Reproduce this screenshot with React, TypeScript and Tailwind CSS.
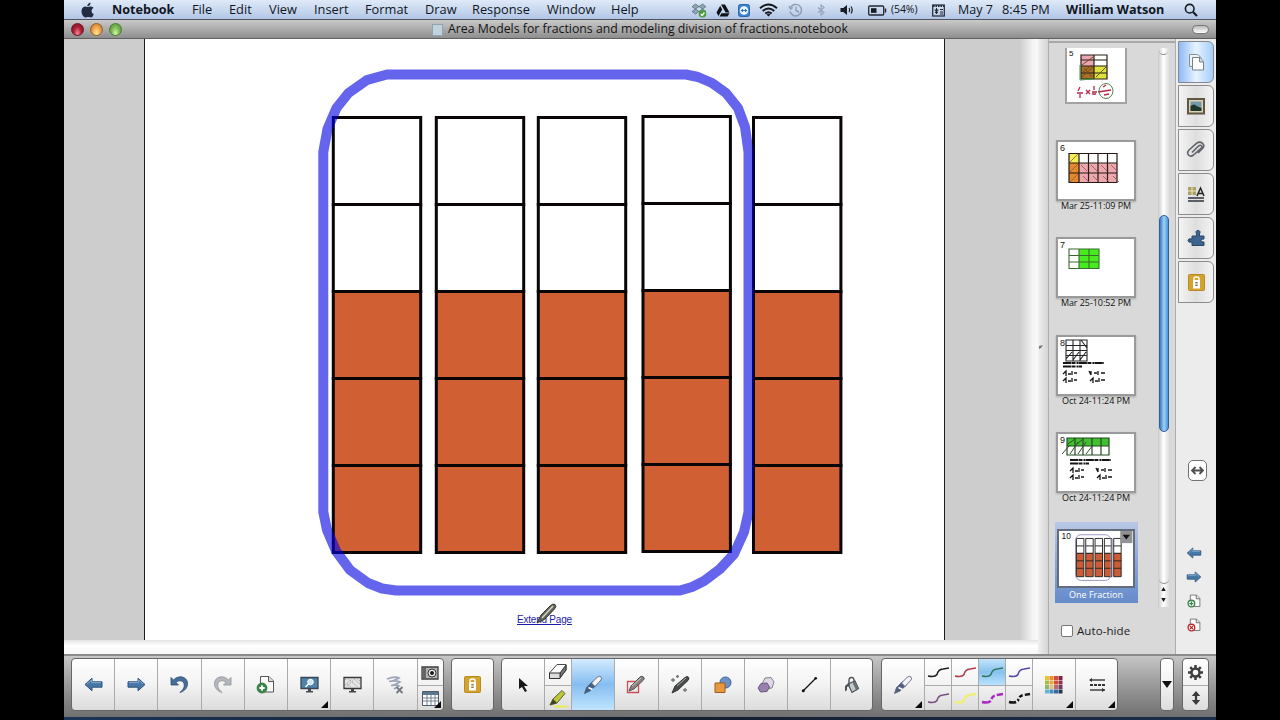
import type { ReactNode } from 'react'

const MENUS = [
  { label: 'Notebook', cls: 'w-[80px] font-bold text-[12.6px]' },
  { label: 'File', cls: 'w-[37px]' },
  { label: 'Edit', cls: 'w-[40px]' },
  { label: 'View', cls: 'w-[45px]' },
  { label: 'Insert', cls: 'w-[51px]' },
  { label: 'Format', cls: 'w-[60px]' },
  { label: 'Draw', cls: 'w-[47px]' },
  { label: 'Response', cls: 'w-[75px]' },
  { label: 'Window', cls: 'w-[64px]' },
  { label: 'Help', cls: 'w-[40px]' },
]

const COLUMNS = [
  { x: 333.3, y: 117.5 },
  { x: 436.3, y: 117.5 },
  { x: 538.3, y: 117.5 },
  { x: 643, y: 116.5 },
  { x: 753.5, y: 117.5 },
]

const CELL = 87

function Icon({ w, h, children }: { w: number; h: number; children: ReactNode }) {
  return (
    <svg width={w} height={h} viewBox={`0 0 ${w} ${h}`} className="block shrink-0" fill="none">
      {children}
    </svg>
  )
}

function BlueArrow({ right, small }: { right?: boolean; small?: boolean }) {
  const w = small ? 16 : 19
  const h = small ? 12 : 15
  return (
    <svg width={w} height={h} viewBox="0 0 19 15" className={right ? 'block -scale-x-100' : 'block'}>
      <path d="M1 7.5 8 1.2v3.6h10v5.4H8v3.6z" fill="#4777a8" stroke="#2f5378" strokeWidth="1" />
      <path d="M3 7 7.5 3v2.6H17" fill="none" stroke="#7fa9cf" />
    </svg>
  )
}

function TurnArrow({ redo }: { redo?: boolean }) {
  return (
    <svg width="19" height="19" viewBox="0 0 19 19" className={redo ? 'block -scale-x-100' : 'block'}>
      <path
        d="M1 2.500v7.500h7.500L6 7.500c3-3 8-2 8.300 2.500.1 3-1.800 5.500-4.500 7.500 5-1.200 8-5 7.700-9.500C17 1.500 8.500-.5 3.500 5z"
        fill={redo ? '#b4b8bd' : '#456f9b'}
        stroke={redo ? '#8f949a' : '#2e4d70'}
        strokeWidth=".8"
      />
    </svg>
  )
}

function PageIcon({ remove, small }: { remove?: boolean; small?: boolean }) {
  const w = small ? 14 : 19
  const color = remove ? '#b52c2c' : '#3a8248'
  return (
    <svg width={w} height={w} viewBox="0 0 19 19" className="block">
      <path d="M4.500 1.500h8.500l4.500 4.500v11h-13z" fill="#fbfbfb" stroke="#555" />
      <path d="M12.500 1.500v5h5" fill="#ddd" stroke="#555" />
      <circle cx="6" cy="13" r="4.500" fill={small ? '#fff' : color} stroke={color} strokeWidth="1.800" />
      {remove ? (
        <path d="m4 11 4 4m0-4-4 4" stroke={color} strokeWidth="1.800" />
      ) : (
        <path d="M6 10.300v5.400M3.300 13h5.400" stroke={small ? color : '#fff'} strokeWidth="1.800" />
      )}
    </svg>
  )
}

function LockIcon() {
  return (
    <Icon w={17} h={17}>
      <rect x=".5" y=".5" width="16" height="16" rx="1" fill="#d3a32d" stroke="#b68a25" />
      <path d="M6 7V4.500q0-1.500 2.500-1.500T11 4.500V7" stroke="#fff" strokeWidth="1.400" />
      <rect x="5" y="6" width="7" height="8.500" fill="#fff" />
      <path d="M8.500 8v4.500" stroke="#8c8052" strokeWidth="2.500" strokeDasharray="1.500 1" />
    </Icon>
  )
}

function PenIcon({ blue }: { blue?: boolean }) {
  return (
    <Icon w={20} h={20}>
      <path d="m1.500 18.500 2-6 6-6 4 3.500-6.500 6z" fill={blue ? '#41618a' : '#53617e'} stroke="#4b5568" strokeWidth=".7" />
      <path d="m8.500 8 6-6q2.500-1.500 3.500 0t0 3l-6 6.500z" fill="#f3f4f8" stroke="#5d6678" strokeWidth=".9" />
      <path d="m5.500 12.500 4 2" stroke="#fff" strokeWidth="1.500" />
    </Icon>
  )
}

function AppleIcon() {
  return (
    <Icon w={13} h={16}>
      <path d="M9.500.5q.2 2-1 3T6.200 4.300q0-1.600 1-2.600T9.500.5z" fill="#29344d" />
      <path
        d="M12.500 5.700q-2 1.200-2 3.200 0 2.300 2.300 3.300-1.200 3.300-3 3.300-.8 0-1.500-.4t-1.800 0-1.700.4C2.500 15.500.5 12.500.5 9.300.5 6.200 2.500 4.500 4.400 4.500q1 0 1.700.4t1.500-.1q3-1 4.900.9z"
        fill="#222c43"
      />
    </Icon>
  )
}

function MenuBar() {
  return (
    <div className="flex h-5 items-center border-b border-[#4e535c] bg-linear-to-b from-[#dfe9f8] via-[#c9d9ef] to-[#b1c5e5] pt-[1px] pl-[17px] text-[12.8px] whitespace-nowrap text-[#101622] *:shrink-0">
      <div className="w-[31px]">
        <AppleIcon />
      </div>
      {MENUS.map((m) => (
        <span key={m.label} className={m.cls}>
          {m.label}
        </span>
      ))}
      <div className="flex w-[281px] items-center pl-[40px] *:shrink-0">
        <div className="w-[25px]">
          <Icon w={16} h={15}>
            <path d="m4.500 1 3.500 2.500L4.500 6 1 3.700zm7 0L15 3.700 11.500 6 8 3.500zm-7 5L8 8.500 4.500 11 1 8.500zm7 0L15 8.500 11.500 11 8 8.500z" fill="#8fa6ae" stroke="#4c6a78" strokeWidth=".7" />
            <circle cx="11.500" cy="10.800" r="3.800" fill="#4b9b36" />
            <path d="m9.700 11 1.500 1.500 2.200-3" stroke="#fff" strokeWidth="1.300" />
          </Icon>
        </div>
        <div className="w-[22px]">
          <Icon w={14} h={13}>
            <path d="M5 .5h4l4.500 8H9.700zM4.200 1.800l2 3.600L2.500 12 .5 8.500zM5.500 9.300h8l-2 3.200h-8z" fill="#0e1117" />
          </Icon>
        </div>
        <div className="w-[21px]">
          <Icon w={12} h={13}>
            <rect x=".5" y=".5" width="11" height="12" rx="2" fill="#3c83d0" stroke="#2d69aa" />
            <circle cx="6" cy="6.500" r="4.300" fill="#f3f8ff" />
            <path d="M2.500 6.500 5 4.500V6h2V4.500l2.500 2L7 8.500V7H5v1.500z" fill="#2f73be" />
          </Icon>
        </div>
        <div className="w-[29px]">
          <Icon w={19} h={14}>
            <path d="M1 5.200Q9.500-2 18 5.200M3.700 8q5.800-5 11.600 0M6.300 10.500q3.200-2.600 6.400 0" stroke="#12161d" strokeWidth="1.900" />
            <path d="m9.500 13.500-2-2q2-1.500 4 0z" fill="#12161d" />
          </Icon>
        </div>
        <div className="w-[29px]">
          <Icon w={15} h={14}>
            <path d="M2.500 4.500A5.800 5.800 0 1 1 2 8.500M8 3.500v4l3 1.500M1 3l1.500 3L5 4.500" stroke="#8e9db4" strokeWidth="1.400" />
          </Icon>
        </div>
        <div className="w-[23px]">
          <Icon w={8} h={12}>
            <path d="m1 3.500 6 5L4 11V1l3 2.500-6 5" stroke="#98a6bd" strokeWidth="1.200" />
          </Icon>
        </div>
        <div className="w-[28px]">
          <Icon w={14} h={12}>
            <path d="M.5 4h2.800L7 1v10L3.300 8H.5z" fill="#191d25" />
            <path d="M9 4q1.300 2 0 4M11 2.500q2.400 3.500 0 7" stroke="#191d25" strokeWidth="1.200" />
          </Icon>
        </div>
        <Icon w={19} h={11}>
          <rect x=".7" y="1" width="15" height="9" rx="1" stroke="#252a33" strokeWidth="1.300" />
          <path d="M3 3.200h5.500v4.600H3z" fill="#151920" />
          <path d="M17.500 3.500v4" stroke="#252a33" strokeWidth="1.500" />
        </Icon>
        <span className="pl-[4px] text-[10.5px] tracking-[-0.1px]">(54%)</span>
      </div>
      <div className="w-[26px]">
        <Icon w={13} h={13}>
          <rect x=".7" y="1" width="11.600" height="11" stroke="#222832" strokeWidth="1.200" />
          <path d="M1 2h11" stroke="#222832" strokeWidth="2" strokeDasharray="1.500 1" />
          <path d="M2.500 6h4M4.500 4v6M3 9l3-2.500M3 6.500 6 9M8 5.500h3M8 8h3M8 10h3" stroke="#222832" strokeWidth="1" />
        </Icon>
      </div>
      <span className="w-[44px] text-[12.5px]">May 7</span>
      <span className="w-[64px]">8:45 PM</span>
      <span className="w-[118px] text-[12.6px] font-bold">William Watson</span>
      <Icon w={14} h={14}>
        <circle cx="5.700" cy="5.700" r="4.300" stroke="#171c25" strokeWidth="1.600" />
        <path d="m9 9 4 4" stroke="#171c25" strokeWidth="2.200" />
      </Icon>
    </div>
  )
}

function TitleBar() {
  return (
    <div className="flex h-[19px] items-center border-b border-[#606060] bg-linear-to-b from-[#cacaca] via-[#acacac] to-[#8e8e8e] pt-[1px] pr-[7px] pl-[7px]">
      <div className="flex w-[361px] gap-[6px]">
        <i className="size-[13px] rounded-full border border-[#6b1a26] bg-radial-[at_50%_85%] from-[#ee8790] via-[#b01e35] to-[#720f22]" />
        <i className="size-[13px] rounded-full border border-[#946129] bg-radial-[at_50%_85%] from-[#ffe99a] via-[#eda64b] to-[#b0662a]" />
        <i className="size-[13px] rounded-full border border-[#4d7c35] bg-radial-[at_50%_85%] from-[#d2f7a7] via-[#7dba55] to-[#4a8133]" />
      </div>
      <i className="h-[12px] w-[11px] border border-[#93a3ad] bg-[#bfd2de]" />
      <span className="ml-[5px] flex-1 text-[12.3px] whitespace-nowrap text-[#141414]">
        Area Models for fractions and modeling division of fractions.notebook
      </span>
      <i className="h-[9px] w-[17px] rounded-full border border-[#777] bg-linear-to-b from-[#bbb] to-white" />
    </div>
  )
}

function FractionPage() {
  return (
    <div className="relative h-[601px] w-[801px] shrink-0 border-x border-[#1c1c1c] bg-white">
      <svg width="799" height="601" viewBox="145 39 799 601" className="block" fill="none">
        {COLUMNS.map((c) => (
          <g key={c.x} stroke="#080504" strokeWidth="3">
            {[0, 1, 2, 3, 4].map((i) => (
              <rect key={i} x={c.x} y={c.y + i * CELL} width={CELL + 0.4} height={CELL} fill={i < 2 ? '#fff' : '#d05f34'} />
            ))}
          </g>
        ))}
        <path
          d="M387 74.500H686L698 77 712 83 726 93 738 108 745 127 748.500 152V512L744 532 734 554 720 569 704 581 692 587 680 590.500H396L382 588.500 368 583 350 570 336 551 327 530 323.300 512V152L327.500 129 336.500 108 348.500 93 367 80Z"
          stroke="rgba(2,2,225,.61)"
          strokeWidth="10"
          strokeLinejoin="round"
        />
      </svg>
      <div className="absolute top-[574px] left-[372px] font-['Liberation_Sans',sans-serif] text-[10px] leading-[13px] tracking-[-0.22px] whitespace-nowrap text-[#1d1daa] underline">
        Extend Page
      </div>
      <div className="absolute top-[564px] left-[391px]">
        <Icon w={21} h={22}>
          <path d="m1 20 4-8L14 3q3-3 5-1.500t-.5 4.500L9 16z" fill="#62645c" stroke="#34362f" />
          <path d="m6 15 11-12" stroke="#d3d3c8" strokeWidth="1.500" />
        </Icon>
      </div>
    </div>
  )
}

function Scribbles({ y }: { y: number }) {
  return (
    <g stroke="#151515">
      <path d={`M5 ${y}H46M5 ${y + 3.5}H24`} strokeWidth="1.800" strokeDasharray="8 .5 4 1 2 .4" />
      <path
        d={`M5 ${y + 11}l3-3v5m2-2h3m1-3v4m2-2h3M31 ${y + 8}l2 4m0-4v4m3-2h3m1-2v4m3-2h4M5 ${y + 18}l3-3v5m2-2h3m1-3v4m2-2h3M32 ${y + 18}l3-3v5m2-2h3m1-3v4m2-2h4`}
        strokeWidth="1.300"
      />
    </g>
  )
}

function Thumb({ n, label, children }: { n: number; label: string; children: ReactNode }) {
  return (
    <div className="flex h-[97.3px] w-[80px] shrink-0 flex-col items-center">
      <div className="h-[61px] w-[80px] border-2 border-[#9a9a9a] bg-white shadow-[0_1px_2px_#aaa]">
        <svg width="76" height="57" viewBox="0 0 76 57" className="block" fill="none">
          <text x="2" y="9" fontSize="9" fill="#111" fontFamily="Liberation Sans">
            {n}
          </text>
          {children}
        </svg>
      </div>
      <span className="-mt-[1px] text-[9px] leading-[12px] tracking-[-0.06px] whitespace-nowrap text-[#111]">{label}</span>
    </div>
  )
}

function ThumbList() {
  return (
    <div className="flex h-[559px] w-[94px] flex-col items-center overflow-hidden">
      <div className="mb-[36px] h-[56px] w-[62px] shrink-0 border-2 border-t-0 border-[#a2a2a2] bg-white">
        <svg width="58" height="54" viewBox="0 0 58 54" className="block" fill="none">
          <text x="2" y="7.500" fontSize="8" fill="#111" fontFamily="Liberation Sans">5</text>
          <path d="M14 7h13v11H14z" fill="#eaa7b5" />
          <path d="M14 18h13v13H14z" fill="#a97327" />
          <path d="M27 18h13v13H27z" fill="#dce33d" />
          <path d="M14 7h26v24H14zM14 12h26M14 18h26M14 25h26M27 7v24" stroke="#272014" strokeWidth="1.200" />
          <path d="m15 17 11-8M15 29l11-10M16 24l9-7M29 29l10-10M17 20l8 9" stroke="#754b20" />
          <path d="M13 17v15l14-1" stroke="#3a9549" />
          <path d="M10 45h6m-3-6-2 4m2 3v4m6-8 4 4m0-4-4 4m6-2h5m-3-6v4m-2 4h4M31 44l13-2M36 39l3-2m-2 10 5-1" stroke="#b32747" strokeWidth="1.300" />
          <ellipse cx="39" cy="43" rx="7" ry="7.500" stroke="#58804e" />
        </svg>
      </div>
      <Thumb n={6} label="Mar 25-11:09 PM">
        <path d="M11 21h48v20H11z" fill="#eca8ad" />
        <path d="M11 11h10v10H11z" fill="#f2ee55" />
        <path d="M11 21h10v20H11z" fill="#e38b2a" />
        <path d="M11 11.500h48v29H11zM11 21h48M11 31h48M21 11v30M30.500 11v30M40 11v30M49.500 11v30" stroke="#261817" strokeWidth="1.200" />
        <path d="m12 20 8-8M12 30l8-8M12 40l8-8m3-9 6 6m4-6 6 6m4-6 6 6m4-6 6 6m-34 5 6 6m4-6 6 6m4-6 6 6m4-6 6 6" stroke="#975155" strokeWidth=".8" />
      </Thumb>
      <Thumb n={7} label="Mar 25-10:52 PM">
        <rect x="11" y="10" width="29" height="19" fill="#fff" />
        <path d="M21 10h20v19H21z" fill="#46ec1d" />
        <path d="M11 10h30v19.500H11zM11 16.500h30M11 23h30M21 10v19M31 10v19" stroke="#386b2d" strokeWidth="1.100" />
      </Thumb>
      <Thumb n={8} label="Oct 24-11:24 PM">
        <path d="M8 3h21v21H8zM8 8.500h21M8 13.500h21M8 18.500h21M15 3v21M22 3v21M8 22l6-7m1 8 6-8m1 8 6-8M23 3l6 8" stroke="#252525" strokeWidth="1.100" />
        <Scribbles y={26} />
      </Thumb>
      <Thumb n={9} label="Oct 24-11:24 PM">
        <path d="M9 4h42v8H9z" fill="#41bf30" />
        <path d="M9 4h42v17H9zM9 12h42M17 4v17M25 4v17M34 4v17M43 4v17" stroke="#254a20" strokeWidth="1.200" />
        <path d="m4 20 8-9m0 9 8-12m0 12 8-12m0 12 7-9M10 10l7-5m2 5 6-5" stroke="#304d2d" />
        <g transform="translate(7 0)">
          <Scribbles y={26} />
        </g>
      </Thumb>
      <div className="-mt-[7px] flex h-[81px] w-[83px] shrink-0 flex-col items-center bg-linear-to-b from-[#b9c8e6] via-[#8aa6da] to-[#668bc9] pt-[7px]">
        <svg width="78" height="59" viewBox="0 0 78 59" className="block shrink-0 border-2 border-[#666d7a] bg-white" fill="none">
          <text x="2" y="9" fontSize="9" fill="#111" fontFamily="Liberation Sans">10</text>
          {[18, 28, 38, 48, 58].map((x) => (
            <g key={x} stroke="#222" strokeWidth="1">
              <path d={`M${x} 8h8v16h-8z`} fill="#fff" />
              <path d={`M${x} 24h8v25h-8z`} fill="#cb5c36" />
              <path d={`M${x} 16h8m-8 16h8m-8 8h8`} />
            </g>
          ))}
          <rect x="17" y="4" width="38" height="49" rx="6" stroke="#9292bd" strokeWidth="1" />
          <path d="M65 0h13v13H65z" fill="#929292" />
          <path d="M67.500 4h8L71.500 9z" fill="#111" />
        </svg>
        <span className="text-[9px] leading-[13px] whitespace-nowrap text-white">One Fraction</span>
      </div>
    </div>
  )
}

function Sidebar() {
  return (
    <div className="flex h-[615px] w-[128px] shrink-0 flex-col border-x border-[#adadad] bg-[#d9d9d9] pt-[2px]">
      <div className="flex h-[568px] border-t-2 border-[#a9a9a9] pt-[5px]">
        <ThumbList />
        <div className="ml-[15px] flex h-[559px] w-[11px] flex-col items-center rounded-t bg-linear-to-r from-[#c9c9c9] via-white to-[#ddd]">
          <i className="h-[7px] w-[9px] rounded-b-full border-b border-[#888]" />
          <i className="mt-[160px] h-[217px] w-[10px] rounded-full border border-[#315f9e] bg-linear-to-r from-[#397bc2] via-[#9dd1f7] to-[#4b94d9]" />
          <i className="mt-[145px] h-[7px] w-[10px] rounded-b-full border-b border-[#888]" />
          <svg width="9" height="21" viewBox="0 0 9 21" className="block shrink-0">
            <path d="m4.500 3 2.200 4H2.300zM4.500 18l2.200-4H2.300z" fill="#181818" />
          </svg>
        </div>
      </div>
      <div className="flex h-[42px] items-center pt-[2px] pl-[12px] text-[11.5px] text-[#1b1b1b]">
        <i className="mr-[4px] size-[12px] rounded-[2px] border border-[#777] bg-white" />
        <span className="tracking-[0.08px] whitespace-nowrap">Auto-hide</span>
      </div>
    </div>
  )
}

const TAB_ICONS = [
  <Icon key="pages" w={17} h={18}>
    <path d="M1.500 1.500h8l3.500 3v9H1.500z" fill="#eef3f8" stroke="#8a8f96" />
    <path d="M4.500 4.500H12l3.500 4V17h-11z" fill="#fff" stroke="#777f88" />
    <path d="M11.500 4.500V9h4" fill="#d6dde4" stroke="#777f88" />
  </Icon>,
  <Icon key="gallery" w={18} h={17}>
    <rect x="1" y="1" width="16" height="14.500" fill="#dcd3b5" stroke="#5f5742" strokeWidth="2" />
    <path d="M3.500 3.500h11v9h-11z" fill="#7597aa" />
    <path d="M3.500 8q4-3 6 0l5 2v3h-11z" fill="#20382a" />
  </Icon>,
  <Icon key="clip" w={20} h={18}>
    <path d="M6 11.500 12.500 5q2-1.500 3 0t-.5 2.500L7.500 14q-3 2.300-5 0t.5-5L11 2q3-2 5.500.3t.2 5L12 12" stroke="#60636a" strokeWidth="1.600" />
  </Icon>,
  <Icon key="style" w={18} h={17}>
    <path d="M1 1h8v8H1z" fill="#a9a06a" />
    <path d="M1 5h8M5 1v8" stroke="#efe7ae" />
    <path d="m10 10 3.500-8L17 10m-6-2.500h5" stroke="#252525" strokeWidth="1.500" />
    <path d="M1 12h16M1 15h16" stroke="#2e3440" strokeWidth="1.700" />
  </Icon>,
  <Icon key="addons" w={18} h={18}>
    <path d="M5 7h4.500V5Q8 1.500 11 1.500T12.500 5v2H17v3q-3-.5-3 1.500t3 1.500v3.500H5V13q-4 1-4-1.500T5 10z" fill="#3d648e" stroke="#294967" />
  </Icon>,
  <LockIcon key="lock" />,
]

function TabStrip() {
  return (
    <div className="flex h-[615px] w-[40px] shrink-0 flex-col items-center bg-[#ececec] pt-[2px]">
      <div className="flex w-[36px] flex-col gap-[2px]">
        {TAB_ICONS.map((icon, i) => (
          <div
            key={i}
            className={
              i === 0
                ? 'flex h-[42px] items-center justify-center rounded-r-md border border-[#85898f] bg-linear-to-r from-[#8dbaf5] via-[#e8f3ff] to-[#a6cdfb]'
                : 'flex h-[42px] items-center justify-center rounded-r-md border border-[#8b8b8b] bg-linear-to-r from-[#f4f4f4] via-[#dedede] to-[#f4f4f4]'
            }
          >
            {icon}
          </div>
        ))}
      </div>
      <div className="mt-[157px] ml-[2px] flex h-[21px] w-[19px] items-center justify-center rounded-[5px] border-[1.5px] border-[#717171] bg-white">
        <Icon w={13} h={9}>
          <path d="M1 4.500h11M4.500 1 1 4.500 4.500 8m4-7L12 4.500 8.500 8" stroke="#4f4f4f" strokeWidth="1.800" />
        </Icon>
      </div>
      <div className="mt-[66px] mr-[4px] flex flex-col items-center gap-[12px]">
        <BlueArrow small />
        <BlueArrow small right />
        <div className="-mt-[1px]">
          <PageIcon small />
        </div>
        <div className="-mt-[2px]">
          <PageIcon small remove />
        </div>
      </div>
    </div>
  )
}

function Group({ children, className = '' }: { children: ReactNode; className?: string }) {
  return (
    <div
      className={`flex h-[53px] shrink-0 divide-x divide-[#aaa] overflow-hidden rounded-[4px] border border-[#666] bg-linear-to-b from-white via-[#f3f3f3] to-[#dcdcdc] ${className}`}
    >
      {children}
    </div>
  )
}

function Tool({ children, active, menu }: { children: ReactNode; active?: boolean; menu?: boolean }) {
  return (
    <div
      className={
        active
          ? 'relative flex w-[43.2px] shrink-0 items-center justify-center bg-linear-to-b from-[#d3ebff] via-[#86bdf0] to-[#bfe5ff]'
          : 'relative flex w-[43.2px] shrink-0 items-center justify-center last:w-auto last:shrink last:grow'
      }
    >
      {children}
      {menu && <Corner />}
    </div>
  )
}

function Corner() {
  return (
    <svg width="7" height="7" viewBox="0 0 7 7" className="absolute right-[2px] bottom-[2px]">
      <path d="M7 0v7H0z" fill="#0b0b0b" />
    </svg>
  )
}

function Split({ top, bottom, menu, topActive }: { top: ReactNode; bottom: ReactNode; menu?: boolean; topActive?: boolean }) {
  return (
    <div className="flex w-[27px] shrink-0 flex-col divide-y divide-[#aaa] last:w-auto last:shrink last:grow">
      <div
        className={
          topActive
            ? 'flex h-[27px] items-center justify-center bg-linear-to-b from-[#c4e4fb] via-[#86c2ee] to-[#b9e3ff]'
            : 'flex h-[27px] items-center justify-center'
        }
      >
        {top}
      </div>
      <div className="relative flex flex-1 items-center justify-center">
        {bottom}
        {menu && <Corner />}
      </div>
    </div>
  )
}

function Squiggle({ color, dash, wide }: { color: string; dash?: string; wide?: boolean }) {
  return (
    <Icon w={23} h={14}>
      <path
        d="M1 11q7 1.500 9-1.500 1-5 6-5.500l6-1"
        stroke={color}
        strokeWidth={wide ? 2.5 : 1.5}
        strokeDasharray={dash}
      />
    </Icon>
  )
}

function Toolbar() {
  return (
    <div className="flex h-[63px] items-start border-t-2 border-[#8b8b8b] bg-linear-to-b from-[#c6c6c6] via-[#989898] to-[#707070] pt-[2px] pl-[7px]">
      <Group className="w-[373px]">
        <Tool><BlueArrow /></Tool>
        <Tool><BlueArrow right /></Tool>
        <Tool><TurnArrow /></Tool>
        <Tool><TurnArrow redo /></Tool>
        <Tool><PageIcon /></Tool>
        <Tool menu>
          <Icon w={19} h={17}>
            <path d="M1 1.500h17v11H1z" fill="#4e83aa" stroke="#3c4654" strokeWidth="1.300" />
            <circle cx="10.500" cy="6" r="2.800" fill="#cfe3f3" stroke="#fff" />
            <path d="m8.500 8-3 3" stroke="#fff" strokeWidth="1.500" />
            <path d="M8 13h3v2h2v1.500H6V15h2z" fill="#454b54" />
          </Icon>
        </Tool>
        <Tool>
          <Icon w={19} h={17}>
            <path d="M1 1.500h17v11H1z" fill="#e5e5e5" stroke="#383838" strokeWidth="1.300" />
            <path d="m2 4 2-2 12 10M2 9l8-7 7 6M2 12 13 2l4 3M4 8l5 4" stroke="#aaa" strokeDasharray="2 1" />
            <path d="M8 13h3v2h2v1.500H6V15h2z" fill="#454545" />
          </Icon>
        </Tool>
        <Tool>
          <Icon w={18} h={18}>
            <path d="M1 3q8-3 12-1Q8 5 3 5.500 10 4 14 6 9 9 5 9.500q6-1 8 .5l-5 3" stroke="#9ca5b9" strokeWidth="1.700" />
            <path d="m10.500 11 6 6m0-6-6 6" stroke="#737983" strokeWidth="1.800" />
          </Icon>
        </Tool>
        <Split
          menu
          top={
            <Icon w={18} h={15}>
              <path d="M1 2h16v12H1z" fill="#b4b4b4" stroke="#3e3e3e" strokeWidth="1.300" />
              <path d="M2 3h3v10H2z" fill="#666" />
              <circle cx="11" cy="8" r="4" fill="#eee" stroke="#333" />
              <circle cx="11" cy="8" r="2" fill="#181818" />
            </Icon>
          }
          bottom={
            <Icon w={17} h={15}>
              <path d="M.5.500h16v14H.5z" fill="#fff" stroke="#4c5968" />
              <path d="M1 1h15v3H1z" fill="#5c7891" />
              <path d="M1 7h15M1 10h15M5 4v10M9 4v10M13 4v10" stroke="#738191" />
            </Icon>
          }
        />
      </Group>
      <Group className="ml-[7px] w-[43px]">
        <Tool><LockIcon /></Tool>
      </Group>
      <Group className="ml-[7px] w-[372px]">
        <Tool>
          <Icon w={11} h={16}>
            <path d="M1 1v11l3-2 3 5 2-1-3-5h4z" fill="#171717" />
          </Icon>
        </Tool>
        <Split
          top={
            <Icon w={20} h={18}>
              <path d="M1.500 10 9 1.500h9V7l-6.500 8.500h-10z" fill="#fff" stroke="#4b4b4b" />
              <path d="m12 10 6-8v5l-6.500 8.500z" fill="#777" stroke="#333" />
              <path d="M1.500 10h10.500v5.500H1.500z" fill="#ddd" stroke="#333" />
            </Icon>
          }
          bottom={
            <Icon w={20} h={19}>
              <path d="m2 16 3-6L14 1.500l3 3-8 9.500z" fill="#bdc63d" stroke="#5b612b" />
              <path d="m2 16 3-6 4 4z" fill="#3e431f" />
              <path d="M6 17.500h13" stroke="#e7ec50" strokeWidth="2" />
            </Icon>
          }
        />
        <Tool active><PenIcon blue /></Tool>
        <Tool>
          <Icon w={20} h={20}>
            <path d="M1.500 6.500h11v11h-11z" stroke="#cc4b50" strokeWidth="1.300" />
            <path d="m3 16 2-5 9-9q2-1.500 3.500 0t0 3L8 14z" fill="#89817e" stroke="#54504f" />
            <path d="m6 11 9-8" stroke="#d4cecb" />
          </Icon>
        </Tool>
        <Tool>
          <Icon w={20} h={20}>
            <path d="m2 18 3-7L15 2.500q2.500-1.800 3.500-.3t-.5 3.300L8 15z" fill="#484b4b" stroke="#373939" />
            <path d="m7 11 9-8" stroke="#aaafaa" />
            <path d="M3 3v4M1 5h4M7.500 0v3M6 1.500h3M15 13v4m-2-2h4" stroke="#777" strokeWidth="1.300" />
          </Icon>
        </Tool>
        <Tool>
          <Icon w={18} h={18}>
            <circle cx="11.500" cy="6.500" r="5.500" fill="#6c91c5" stroke="#3f6390" />
            <path d="M1 7h10v9.500H1z" fill="#e8993b" stroke="#9c5c20" />
          </Icon>
        </Tool>
        <Tool>
          <Icon w={18} h={18}>
            <path d="m5 8 3-6 6-.5L17 6l-2 6-7 1z" fill="#ddd8e4" stroke="#84808b" />
            <path d="M1 12 4 7.500l6-.5 2.500 4-2.500 4.500-6.500.5z" fill="#987fae" stroke="#6b567d" />
          </Icon>
        </Tool>
        <Tool>
          <Icon w={17} h={17}>
            <path d="M2 15 15 2" stroke="#111" strokeWidth="1.300" />
            <circle cx="2.300" cy="14.700" r="1.500" fill="#111" />
            <circle cx="14.700" cy="2.300" r="1.300" fill="#111" />
          </Icon>
        </Tool>
        <Tool>
          <Icon w={17} h={18}>
            <path d="M5 8 12 5l3.500 7.500L9 16.500z" fill="#c3c8ca" stroke="#4b5155" strokeWidth="1.200" />
            <path d="m9.500 6.500 4 8.500 2-2.500L12 5z" fill="#667076" />
            <path d="M6 8V4q.5-3 3-2.500T11 6" stroke="#4b5155" strokeWidth="1.400" />
            <path d="M7 7.500Q2 8 2 11v4.500L4 14v-3l2.500-1z" fill="#48555e" />
          </Icon>
        </Tool>
      </Group>
      <Group className="ml-[8px] w-[237px]">
        <Tool menu><PenIcon /></Tool>
        <Split top={<Squiggle color="#202020" />} bottom={<Squiggle color="#775082" />} />
        <Split top={<Squiggle color="#b43b4b" />} bottom={<Squiggle color="#eeee7b" wide />} />
        <Split topActive top={<Squiggle color="#337a66" />} bottom={<Squiggle color="#ad27c5" wide dash="9 2 5 2" />} />
        <Split top={<Squiggle color="#524ab4" />} bottom={<Squiggle color="#151515" wide dash="7 2 2 2 4 2" />} />
        <Tool menu>
          <Icon w={18} h={18}>
            {[
              ['#e8c52d', '#f08a33', '#ce5235', '#8b203e'],
              ['#a4bf3c', '#eca345', '#d64c39', '#943148'],
              ['#8bbb68', '#e2c087', '#b46b78', '#6a3d61'],
              ['#62b9cf', '#498ac0', '#38699a', '#29344d'],
            ].map((row, y) =>
              row.map((c, x) => <rect key={`${x}-${y}`} x={x * 4.5} y={y * 4.5} width="4" height="4" fill={c} />),
            )}
          </Icon>
        </Tool>
        <Tool menu>
          <Icon w={18} h={16}>
            <path d="M2 3h15M2 13h15" stroke="#444" strokeWidth="1.300" />
            <path d="M2 8h15" stroke="#333" strokeWidth="2" strokeDasharray="3 1" />
            <path d="m1 3 3-2v4zM17 13l-3-2v4z" fill="#333" />
          </Icon>
        </Tool>
      </Group>
      <Group className="ml-[42px] w-[14px]">
        <Tool>
          <Icon w={10} h={7}>
            <path d="M0 0h10L5 7z" fill="#121212" />
          </Icon>
        </Tool>
      </Group>
      <Group className="ml-[8px] w-[27px]">
        <Split
          top={
            <Icon w={15} h={15}>
              <circle cx="7.500" cy="7.500" r="4" stroke="#3e3e3e" strokeWidth="2.500" />
              <path d="M7.500 0v3m0 9v3M0 7.500h3m9 0h3M2.200 2.200l2 2m6.600 6.600 2 2m0-10.600-2 2m-6.600 6.600-2 2" stroke="#3e3e3e" strokeWidth="2.500" />
            </Icon>
          }
          bottom={
            <Icon w={10} h={14}>
              <path d="M5 2v10" stroke="#3a3a3a" strokeWidth="2.200" />
              <path d="M.8 5 5 0l4.200 5zM.8 9 5 14l4.200-5z" fill="#3a3a3a" />
            </Icon>
          }
        />
      </Group>
    </div>
  )
}

export default function App() {
  return (
    <div className="flex h-[720px] w-[1280px] justify-center overflow-hidden bg-black font-['Open_Sans','Noto_Sans',sans-serif]">
      <div className="flex w-[1152px] flex-col bg-[#17202f]">
        <MenuBar />
        <TitleBar />
        <div className="flex h-[615px] bg-[#e6e6e6]">
          <div className="w-[974px] shrink-0">
            <div className="flex h-[601px] bg-[#cdcdcd] pl-[80px]">
              <FractionPage />
              <div className="w-[75px]" />
              <div className="flex-1 bg-linear-to-r from-[#cdcdcd] via-[#f4f4f4] via-70% to-[#fafafa]" />
            </div>
            <div className="h-[14px] bg-linear-to-b from-[#e4e4e4] via-white via-40% to-[#f6f6f6]" />
          </div>
          <div className="flex w-[10px] shrink-0 items-center bg-linear-to-r from-[#f0f0f0] to-[#d5d5d5]">
            <Icon w={6} h={6}>
              <path d="M1 5V2l4-1-2 3z" fill="#777" />
            </Icon>
          </div>
          <Sidebar />
          <TabStrip />
        </div>
        <Toolbar />
        <div className="h-[3px] bg-linear-to-r from-[#1b3459] via-[#121d2c] to-[#1c2e4b]" />
      </div>
    </div>
  )
}
